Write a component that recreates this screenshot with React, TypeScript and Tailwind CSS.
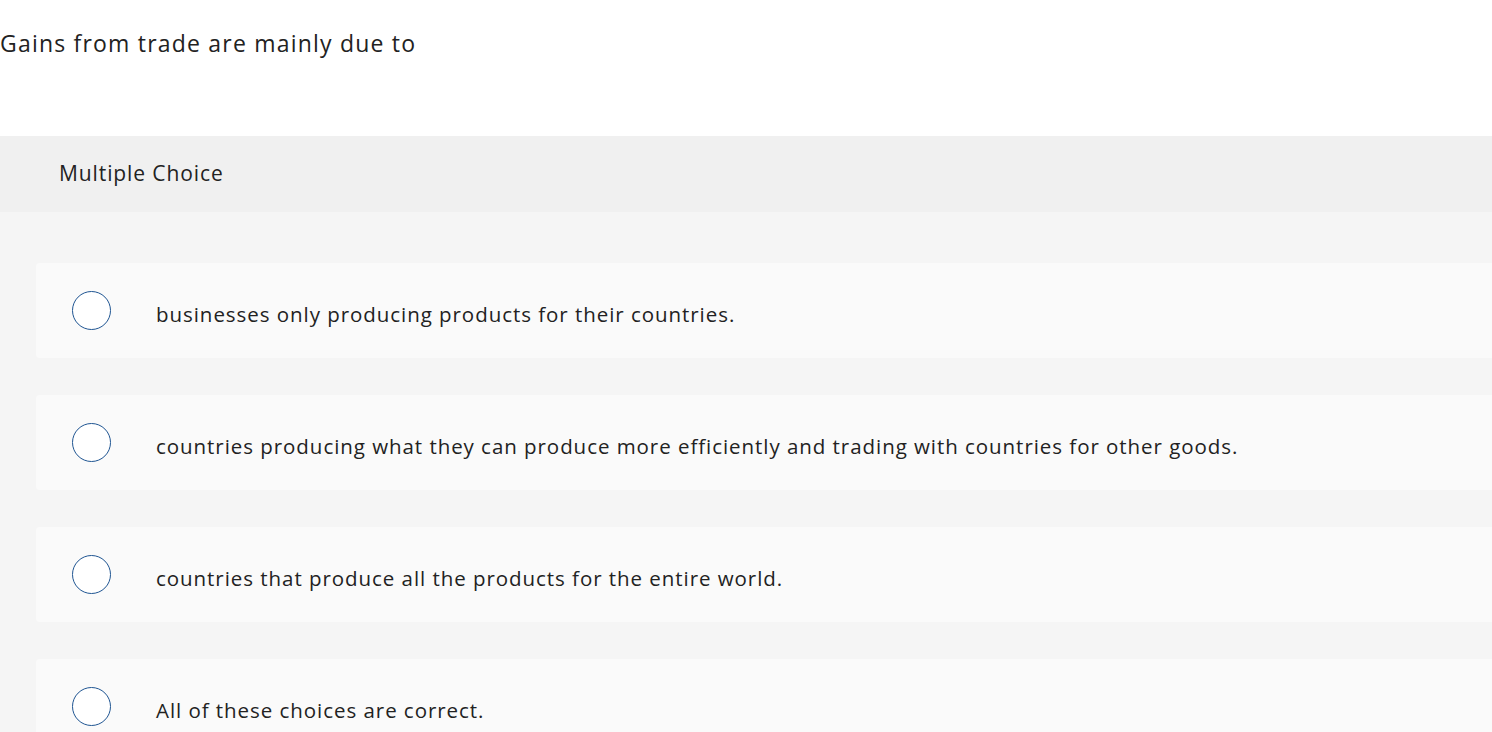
const choices = [
  'businesses only producing products for their countries.',
  'countries producing what they can produce more efficiently and trading with countries for other goods.',
  'countries that produce all the products for the entire world.',
  'All of these choices are correct.',
]

function Radio() {
  return (
    <span className="w-[39px] h-[39px] rounded-full border-[1.6px] border-[#1f5592] bg-white flex-shrink-0" />
  )
}

export default function App() {
  return (
    <div
      className="min-h-screen bg-white text-[#222] overflow-hidden"
      style={{ fontFamily: '"Open Sans", "Liberation Sans", sans-serif' }}
    >
      <div className="h-[136px] pt-[27px]">
        <p className="text-[23px] leading-[32px] tracking-[1.2px]">Gains from trade are mainly due to</p>
      </div>
      <div className="h-[76px] bg-[#f0f0f0] flex items-center pl-[59px]">
        <span className="text-[21px] tracking-[0.9px] text-[#222]">Multiple Choice</span>
      </div>
      <div className="bg-[#f5f5f5] pl-[36px] pt-[51px] pb-[40px] flex flex-col gap-[37px]">
        {choices.map((c) => (
          <label key={c} className="h-[95px] bg-[#fafafa] rounded-l-[4px] flex items-center pl-[36px] cursor-pointer">
            <Radio />
            <span className="ml-[45px] text-[20.5px] tracking-[0.95px] leading-[28px] mt-[6px]">{c}</span>
          </label>
        ))}
      </div>
    </div>
  )
}
